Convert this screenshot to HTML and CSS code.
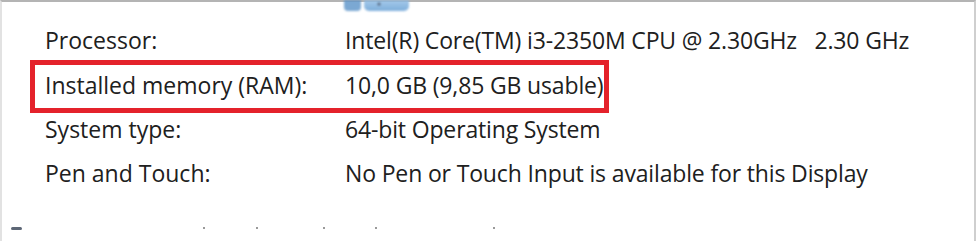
FILE: index.html
```html
<!DOCTYPE html>
<html lang="en">

<head>
    <meta charset="UTF-8">
    <title>System</title>
    <link rel="stylesheet" href="styles.css">
</head>

<body>
    <main class="panel">
        <div class="logo-peek">
            <svg width="68" height="14" viewBox="0 0 68 14">
                <defs>
                    <linearGradient id="peek" x1="0" y1="0" x2="0" y2="1">
                        <stop offset="0" stop-color="#a9d0f0" />
                        <stop offset="1" stop-color="#5f9bd3" />
                    </linearGradient>
                </defs>
                <rect x="1" y="-6" width="17" height="17" rx="4" fill="#5b93c9" />
                <rect x="21" y="-6" width="45" height="17" rx="5" fill="url(#peek)" />
                <circle cx="36" cy="4" r="1.6" fill="#2b3f5e" />
            </svg>
        </div>

        <div class="specs">
            <div class="row">
                <span class="label">Processor:</span>
                <span class="value">Intel(R) Core(TM) i3-2350M CPU @ 2.30GHz&nbsp;&nbsp;&nbsp;2.30 GHz</span>
            </div>
            <div class="row row-marked">
                <span class="label">Installed memory (RAM):</span>
                <span class="value">10,0 GB (9,85 GB usable)</span>
            </div>
            <div class="row">
                <span class="label">System type:</span>
                <span class="value">64-bit Operating System</span>
            </div>
            <div class="row">
                <span class="label">Pen and Touch:</span>
                <span class="value">No Pen or Touch Input is available for this Display</span>
            </div>
        </div>

        <div class="cut-row">
            <span class="dash"></span>
            <span class="dot d1"></span>
            <span class="dot d2"></span>
            <span class="dot d3"></span>
            <span class="dot d4"></span>
            <span class="dot d5"></span>
        </div>
    </main>
</body>

</html>
```

FILE: styles.css
```css
* {
    padding: 0;
    margin: 0;
    box-sizing: border-box;
}

body {
    background: #fff;
    font-family: "Open Sans", "DejaVu Sans", sans-serif;
    color: #202020;
}

.panel {
    width: 976px;
    height: 241px;
    border-top: 2px solid #b4b4b4;
    border-left: 2px solid #e2e2e2;
    border-right: 2px solid #cfcfcf;
    position: relative;
}

.logo-peek {
    position: absolute;
    left: 341px;
    top: -2px;
    line-height: 0;
    opacity: 0.8;
    filter: blur(0.8px);
}

.specs {
    padding-top: 16px;
}

.row {
    display: grid;
    grid-template-columns: 300px auto;
    padding-left: 43px;
    font-size: 23px;
    line-height: 44px;
    white-space: nowrap;
}

.value {
    letter-spacing: -0.15px;
}

.row-marked {
    width: fit-content;
    margin: -2px 0 -6px 28px;
    padding: 0 1px 3px 10px;
    border: 5px solid #e4222b;
    line-height: 40px;
}

.cut-row {
    position: relative;
    height: 12px;
    margin-top: 29px;
}

.dash {
    position: absolute;
    left: 9px;
    top: 3px;
    width: 11px;
    height: 3px;
    border-radius: 2px;
    background: #5d6776;
}

.dot {
    position: absolute;
    top: 3px;
    width: 2px;
    height: 2px;
    background: #9a9a9a;
}

.d1 { left: 201px; }
.d2 { left: 254px; }
.d3 { left: 321px; }
.d4 { left: 373px; }
.d5 { left: 491px; }
```
